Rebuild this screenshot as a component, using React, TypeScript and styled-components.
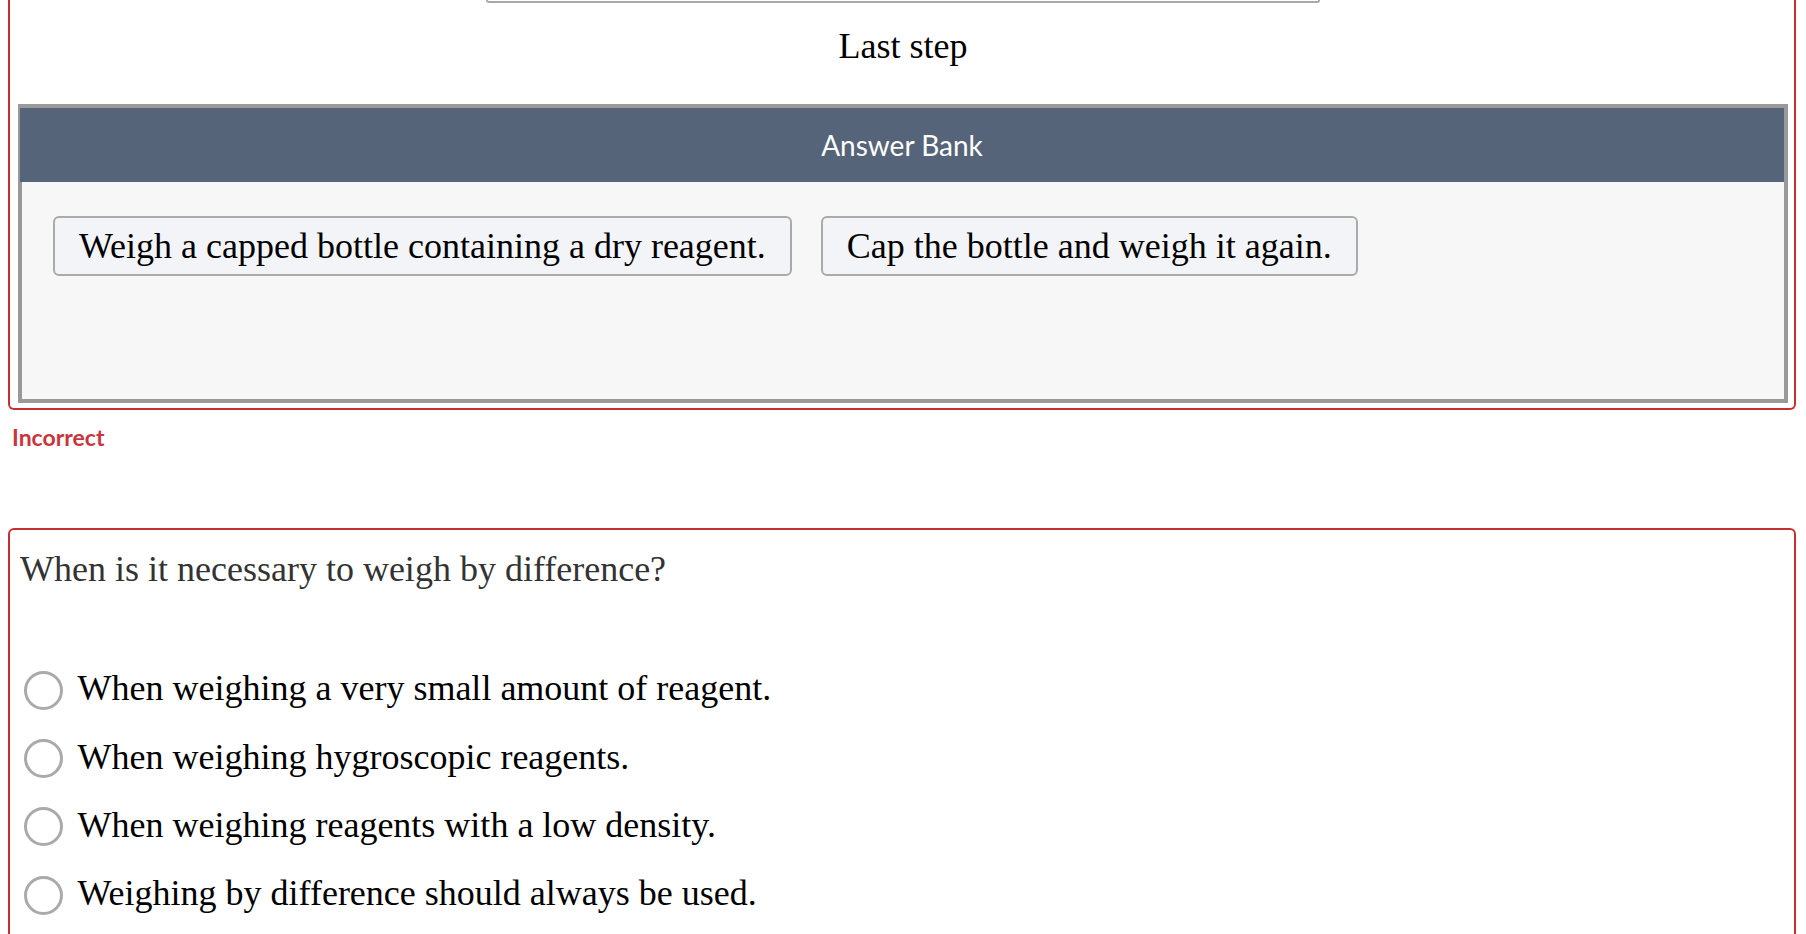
import React from "react";
import styled, { createGlobalStyle } from "styled-components";

const GlobalStyle = createGlobalStyle`
  html, body {
    background: #ffffff;
  }
  body {
    margin: 0 8px 8px;
    font-family: "Liberation Serif", "Times New Roman", serif;
    color: #000;
  }
  * { box-sizing: border-box; }
`;

const RED = "#c53030";

const Page = styled.main`
  display: flex;
  flex-direction: column;
`;

/* the first card is scrolled so its top edge is above the viewport */
const Card = styled.section<{ $cut?: boolean }>`
  border: 2px solid ${RED};
  border-radius: 6px;
  margin-right: 2px;
  ${(p) =>
    p.$cut
      ? `border-top: none; border-top-left-radius: 0; border-top-right-radius: 0; padding: 0 6px 5px 8px;`
      : `padding: 19px 10px 40px 0;`}
`;

/* only the bottom of the drop slot above remains in view */
const DropSlot = styled.div`
  width: 834px;
  height: 3px;
  margin: 0 auto;
  border: 2px solid #a8a8a8;
  border-top: none;
  border-radius: 0 0 7px 7px;
  background: #ffffff;
`;

const StepLabel = styled.div`
  margin-top: 23px;
  text-align: center;
  font-size: 36px;
  line-height: 40px;
`;

const Bank = styled.div`
  margin-top: 38px;
  border: 4px solid #999999;
`;

const BankHeader = styled.div`
  height: 74px;
  margin-left: -2px;
  display: flex;
  align-items: center;
  justify-content: center;
  background: #566479;
  color: #ffffff;
  font-family: Lato, "Noto Sans", sans-serif;
  font-size: 28px;
`;

const BankBody = styled.div`
  background: #f7f7f7;
  padding: 34px 31px 123px;
  display: flex;
  flex-wrap: wrap;
  gap: 29px;
`;

const Tile = styled.button`
  font-family: "Liberation Serif", "Times New Roman", serif;
  font-size: 36px;
  line-height: 40px;
  color: #000;
  background: #f3f4f7;
  border: 2px solid #aaaaaa;
  border-radius: 6px;
  padding: 8px 24px;
  cursor: grab;
`;

const Feedback = styled.div`
  margin-top: 13.5px;
  padding-left: 4px;
  font-family: Lato, "Noto Sans", sans-serif;
  font-weight: 700;
  font-size: 23px;
  line-height: 1.2;
  color: #c8363d;
`;

const SecondCard = styled(Card)`
  margin-top: 77px;
`;

const Question = styled.div`
  padding-left: 10px;
  font-size: 36px;
  line-height: 40px;
  color: #333333;
`;

const OptionList = styled.div`
  margin-top: 65px;
  display: flex;
  flex-direction: column;
`;

const OptionRow = styled.label`
  display: flex;
  align-items: center;
  gap: 14.5px;
  padding: 14.15px 0 14.15px 14px;
  font-size: 36px;
  line-height: 40px;
  color: #000;
  cursor: pointer;
`;

const Radio = styled.span`
  flex: none;
  width: 39px;
  height: 39px;
  transform: translateY(2px);
  border-radius: 50%;
  border: 3.5px solid #aaaaaa;
  background: #ffffff;
`;

const tiles = [
  "Weigh a capped bottle containing a dry reagent.",
  "Cap the bottle and weigh it again.",
];

const options = [
  "When weighing a very small amount of reagent.",
  "When weighing hygroscopic reagents.",
  "When weighing reagents with a low density.",
  "Weighing by difference should always be used.",
];

export default function App() {
  return (
    <>
      <GlobalStyle />
      <Page>
        <Card $cut>
          <DropSlot />
          <StepLabel>Last step</StepLabel>
          <Bank>
            <BankHeader>Answer Bank</BankHeader>
            <BankBody>
              {tiles.map((t) => (
                <Tile key={t} type="button">
                  {t}
                </Tile>
              ))}
            </BankBody>
          </Bank>
        </Card>
        <Feedback>Incorrect</Feedback>
        <SecondCard>
          <Question>When is it necessary to weigh by difference?</Question>
          <OptionList>
            {options.map((o) => (
              <OptionRow key={o}>
                <Radio />
                {o}
              </OptionRow>
            ))}
          </OptionList>
        </SecondCard>
      </Page>
    </>
  );
}
